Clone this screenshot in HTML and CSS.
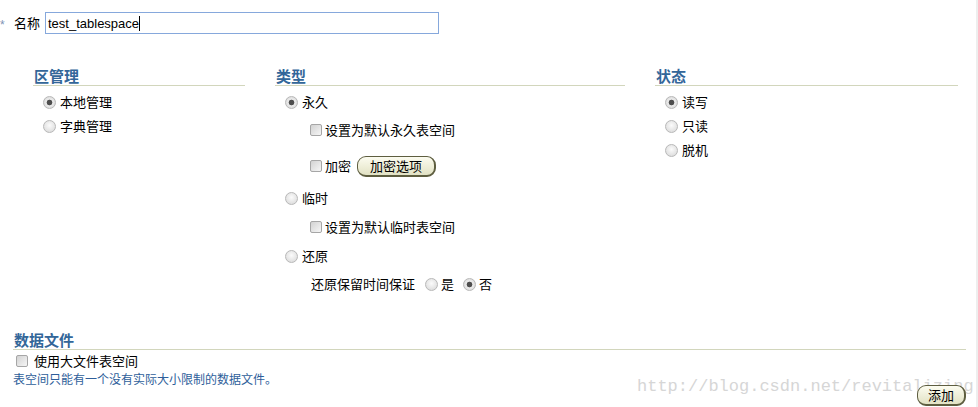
FILE: index.html
```html
<!DOCTYPE html>
<html lang="zh-CN">
<head>
    <meta charset="UTF-8">
    <meta name="viewport" content="width=device-width, initial-scale=1.0">
    <title>创建表空间</title>
    <link rel="stylesheet" href="styles.css">
</head>
<body>
    <div class="page">
        <div class="name-row">
            <span class="req">*</span>
            <label class="name-label">名称</label>
            <div class="name-field"><span>test_tablespace</span><span class="caret"></span></div>
        </div>

        <div class="groups">
            <section class="group">
                <h2>区管理</h2>
                <div class="opts">
                    <label class="opt"><input type="radio" class="radio" name="extent" checked>本地管理</label>
                    <label class="opt"><input type="radio" class="radio" name="extent">字典管理</label>
                </div>
            </section>

            <section class="group">
                <h2>类型</h2>
                <div class="opts">
                    <label class="opt"><input type="radio" class="radio" name="type" checked>永久</label>
                    <label class="opt sub sub-perm"><input type="checkbox" class="check">设置为默认永久表空间</label>
                    <div class="opt sub enc">
                        <label class="inline"><input type="checkbox" class="check">加密</label>
                        <button class="btn btn-enc">加密选项</button>
                    </div>
                    <label class="opt temp"><input type="radio" class="radio" name="type">临时</label>
                    <label class="opt sub sub-temp"><input type="checkbox" class="check">设置为默认临时表空间</label>
                    <label class="opt undo"><input type="radio" class="radio" name="type">还原</label>
                    <div class="opt retain">
                        <span>还原保留时间保证</span>
                        <label class="inline yes"><input type="radio" class="radio" name="retain">是</label>
                        <label class="inline no"><input type="radio" class="radio" name="retain" checked>否</label>
                    </div>
                </div>
            </section>

            <section class="group">
                <h2>状态</h2>
                <div class="opts">
                    <label class="opt"><input type="radio" class="radio" name="status" checked>读写</label>
                    <label class="opt"><input type="radio" class="radio" name="status">只读</label>
                    <label class="opt"><input type="radio" class="radio" name="status">脱机</label>
                </div>
            </section>
        </div>

        <section class="datafile">
            <h2>数据文件</h2>
            <label class="big-file"><input type="checkbox" class="check">使用大文件表空间</label>
            <p class="note">表空间只能有一个没有实际大小限制的数据文件。</p>
        </section>

        <div class="actions">
            <button class="btn btn-add">添加</button>
        </div>

        <div class="watermark">http://blog.csdn.net/revitalizing</div>
    </div>
</body>
</html>
```

FILE: styles.css
```css
body {
    margin: 0;
    background-color: #fff;
    font-family: "Noto Sans CJK SC", "Liberation Sans", sans-serif;
    font-size: 13px;
    color: #000;
}

.page {
    position: relative;
    width: 976px;
    height: 407px;
    border-right: 2px solid #eeeeee;
    overflow: hidden;
}

/* name row */
.name-row {
    display: flex;
    align-items: center;
    padding-top: 12px;
    height: 22px;
}

.req {
    width: 14px;
    font-family: "Liberation Sans", Arial, sans-serif;
    font-size: 12px;
    color: #7f93b4;
    line-height: 12px;
    margin-top: 4px;
}

.name-label {
    width: 26px;
    margin-right: 5px;
    line-height: 22px;
}

.name-field {
    box-sizing: border-box;
    display: flex;
    align-items: center;
    width: 394px;
    height: 22px;
    padding-left: 2px;
    border: 1px solid #86a8dc;
    font-family: "Liberation Sans", Arial, sans-serif;
    font-size: 13px;
}

.caret {
    width: 1px;
    height: 15px;
    background-color: #000;
}

/* groups */
.groups {
    display: grid;
    grid-template-columns: 212px 350px 303px;
    column-gap: 30px;
    margin-top: 33px;
    padding-left: 33px;
}

h2 {
    margin: 0;
    font-size: 15px;
    font-weight: bold;
    line-height: 18px;
    color: #336699;
    border-bottom: 1px solid #d2d6bc;
    padding-left: 1px;
}

.opts {
    padding-top: 4px;
    padding-left: 10px;
}

.opt {
    display: flex;
    align-items: center;
    height: 24px;
    line-height: 16px;
}

.inline {
    display: flex;
    align-items: center;
}

.sub {
    padding-left: 25px;
}

.sub-perm { margin-top: 4px; }
.enc { margin-top: 12px; }
.temp { margin-top: 8px; }
.sub-temp { margin-top: 5px; }
.undo { margin-top: 5px; }
.retain {
    margin-top: 4px;
    padding-left: 26px;
}

.retain .yes { margin-left: 10px; }
.retain .no { margin-left: 9px; }
.retain .radio { margin-right: 3px; }

/* form controls */
.radio {
    appearance: none;
    -webkit-appearance: none;
    box-sizing: border-box;
    width: 13px;
    height: 13px;
    margin: 0 4px 0 0;
    border: 1px solid #b8b8b8;
    border-radius: 50%;
    background: radial-gradient(circle at 50% 40%, #fbfbfb, #d6d6d6);
}

.radio:checked {
    background: radial-gradient(circle, #4e4e4e 0 2.5px, #ececec 3.2px, #d2d2d2);
}

.check {
    appearance: none;
    -webkit-appearance: none;
    box-sizing: border-box;
    width: 12px;
    height: 12px;
    margin: 0 3px 0 0;
    border: 1px solid #a6a6a6;
    border-radius: 2px;
    background: linear-gradient(135deg, #d2d2d2, #f6f6f6);
}

.btn {
    box-sizing: border-box;
    height: 21px;
    border: 1px solid #5e5e40;
    border-right-width: 2px;
    border-bottom-width: 2px;
    border-radius: 9px;
    background: linear-gradient(#fcfcf0, #e2e2c4);
    font-family: "Noto Sans CJK SC", sans-serif;
    font-size: 13px;
    line-height: 16px;
    color: #000;
    cursor: pointer;
}

.btn-enc {
    width: 79px;
    margin-left: 6px;
}

/* data file */
.datafile {
    margin: 35px 10px 0 13px;
}

.big-file {
    display: flex;
    align-items: center;
    height: 21px;
    padding-left: 3px;
}

.big-file .check {
    margin-right: 6px;
}

.note {
    margin: 0;
    font-size: 12px;
    line-height: 15px;
    color: #2e5e9a;
}

.actions {
    display: flex;
    justify-content: flex-end;
    padding-right: 10px;
    margin-top: -1px;
}

.btn-add {
    position: relative;
    z-index: 1;
    width: 49px;
}

.watermark {
    position: absolute;
    left: 637px;
    top: 377px;
    font-family: "Liberation Mono", monospace;
    font-size: 17px;
    color: #d6d6d6;
    white-space: nowrap;
}
```
